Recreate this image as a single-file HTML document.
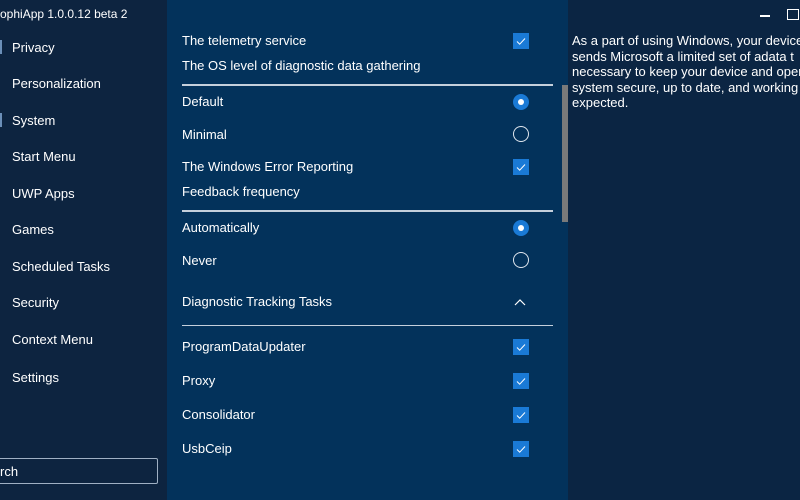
<!DOCTYPE html><html><head><style>
body{margin:0;width:800px;height:500px;overflow:hidden;font-family:"Liberation Sans",sans-serif;color:#fff;position:relative;background:#0b2543}
div{position:absolute}
.sb{left:0;top:0;width:167px;height:500px;background:#0d2440}
.mn{left:167px;top:0;width:401px;height:500px;background:#03325b}
.t{font-size:13px;white-space:nowrap}
.n{font-size:13px;left:12px}
.cb{width:16px;height:16px;background:#1a7ad6;left:513px}
.cb svg{position:absolute;left:0;top:0}
.rd{width:16px;height:16px;border-radius:50%;left:513px;box-sizing:border-box}
.on{background:#1a7ad6}
.on::after{content:"";position:absolute;left:5px;top:5px;width:6px;height:6px;border-radius:50%;background:#fff}
.off{border:1.3px solid #dfe6ee}
.ln{left:182px;width:371px;height:2px;background:#c5d0dc}
</style></head><body>
<div class="sb"></div><div class="mn"></div>
<div class="t" style="left:0;top:7px;font-size:12px">ophiApp 1.0.0.12 beta 2</div>
<div style="left:0;top:40px;width:2px;height:14px;background:#6b8fb8"></div>
<div style="left:0;top:113px;width:2px;height:14px;background:#6b8fb8"></div>
<div class="t n" style="top:40px">Privacy</div>
<div class="t n" style="top:76px">Personalization</div>
<div class="t n" style="top:113px">System</div>
<div class="t n" style="top:149px">Start Menu</div>
<div class="t n" style="top:186px">UWP Apps</div>
<div class="t n" style="top:222px">Games</div>
<div class="t n" style="top:259px">Scheduled Tasks</div>
<div class="t n" style="top:295px">Security</div>
<div class="t n" style="top:332px">Context Menu</div>
<div class="t n" style="top:370px">Settings</div>
<div style="left:-4px;top:458px;width:160px;height:24px;border:1.5px solid #9fb0c4;border-radius:2px"></div>
<div class="t" style="left:0;top:464px">rch</div>

<div class="t" style="left:182px;top:33px">The telemetry service</div><div class="cb" style="top:33px"><svg width="16" height="16"><path d="M4 8.5l2.7 2.7L12 5.5" stroke="#fff" fill="none" stroke-width="1"/></svg></div>
<div class="t" style="left:182px;top:58px">The OS level of diagnostic data gathering</div>
<div class="ln" style="top:84px"></div>
<div class="t" style="left:182px;top:94px">Default</div><div class="rd on" style="top:94px"></div>
<div class="t" style="left:182px;top:127px">Minimal</div><div class="rd off" style="top:126px"></div>
<div class="t" style="left:182px;top:159px">The Windows Error Reporting</div><div class="cb" style="top:159px"><svg width="16" height="16"><path d="M4 8.5l2.7 2.7L12 5.5" stroke="#fff" fill="none" stroke-width="1"/></svg></div>
<div class="t" style="left:182px;top:184px">Feedback frequency</div>
<div class="ln" style="top:210px"></div>
<div class="t" style="left:182px;top:220px">Automatically</div><div class="rd on" style="top:220px"></div>
<div class="t" style="left:182px;top:253px">Never</div><div class="rd off" style="top:252px"></div>
<div class="t" style="left:182px;top:294px">Diagnostic Tracking Tasks</div>
<div style="left:513px;top:295px"><svg width="14" height="10"><path d="M2 7l5-5 5 5" stroke="#fff" fill="none" stroke-width="1.2"/></svg></div>
<div class="ln" style="top:325px;height:1px"></div>
<div class="t" style="left:182px;top:339px">ProgramDataUpdater</div><div class="cb" style="top:339px"><svg width="16" height="16"><path d="M4 8.5l2.7 2.7L12 5.5" stroke="#fff" fill="none" stroke-width="1"/></svg></div>
<div class="t" style="left:182px;top:373px">Proxy</div><div class="cb" style="top:373px"><svg width="16" height="16"><path d="M4 8.5l2.7 2.7L12 5.5" stroke="#fff" fill="none" stroke-width="1"/></svg></div>
<div class="t" style="left:182px;top:407px">Consolidator</div><div class="cb" style="top:407px"><svg width="16" height="16"><path d="M4 8.5l2.7 2.7L12 5.5" stroke="#fff" fill="none" stroke-width="1"/></svg></div>
<div class="t" style="left:182px;top:441px">UsbCeip</div><div class="cb" style="top:441px"><svg width="16" height="16"><path d="M4 8.5l2.7 2.7L12 5.5" stroke="#fff" fill="none" stroke-width="1"/></svg></div>
<div style="left:562px;top:85px;width:6px;height:137px;background:#7a7a7a"></div>

<div style="left:760px;top:15px;width:10px;height:2px;background:#fff"></div>
<div style="left:787px;top:9px;width:10px;height:9px;border:1.5px solid #fff"></div>
<div style="left:572px;top:33px;font-size:13px;line-height:15.5px;white-space:nowrap">As a part of using Windows, your device<br>sends Microsoft a limited set of adata t<br>necessary to keep your device and oper<br>system secure, up to date, and working<br>expected.</div>
</body></html>
